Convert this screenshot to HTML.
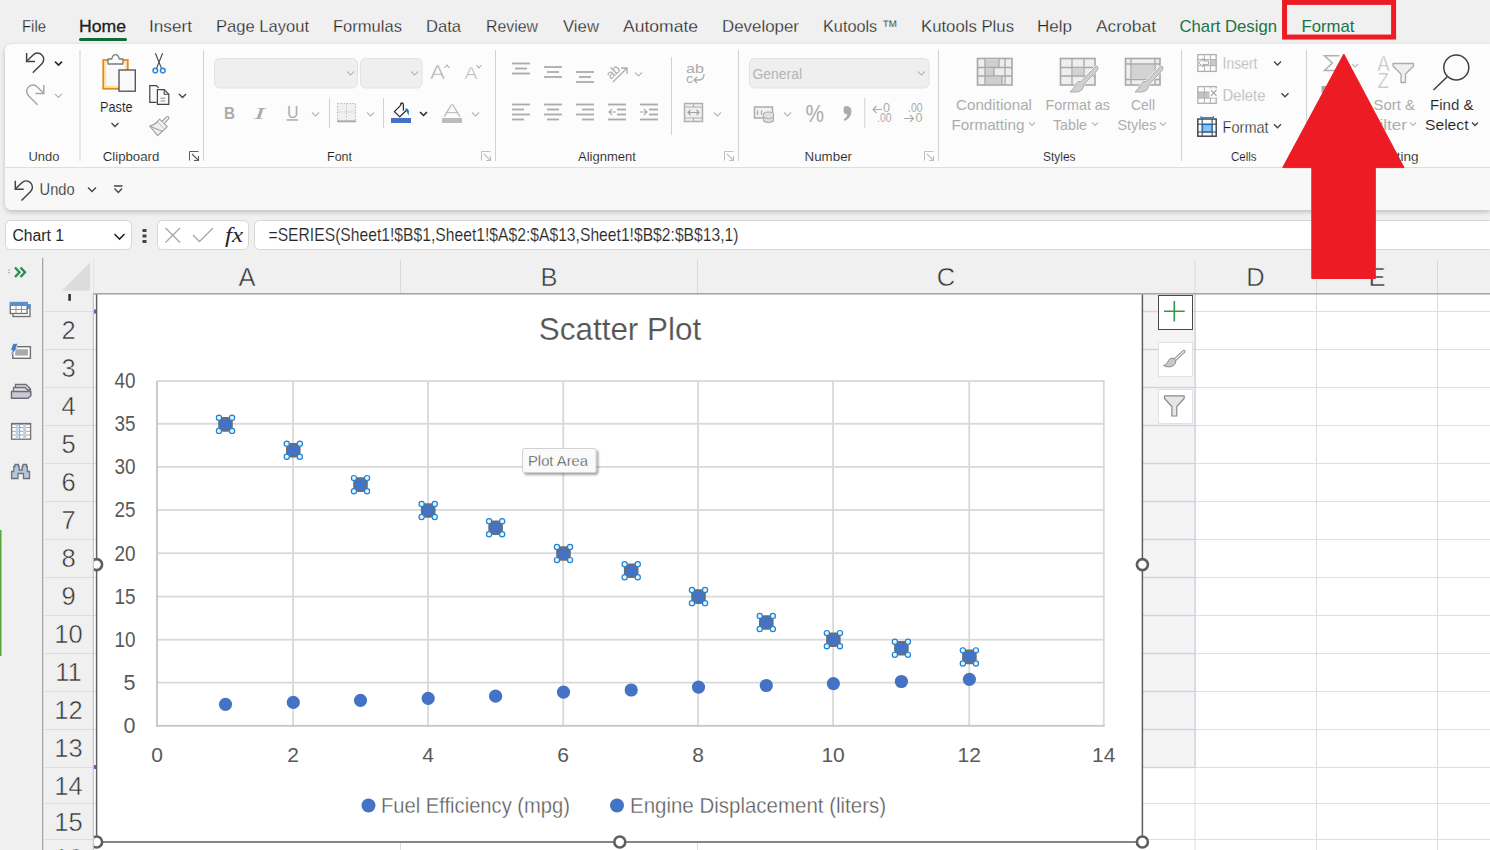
<!DOCTYPE html>
<html><head><meta charset="utf-8">
<style>
html,body{margin:0;padding:0;width:1490px;height:850px;overflow:hidden;background:#f0f0f0;}
svg{display:block;font-family:"Liberation Sans",sans-serif;}
</style></head><body>
<svg width="1490" height="850" viewBox="0 0 1490 850">
<defs>
<filter id="shadow" x="-5%" y="-20%" width="110%" height="150%">
<feGaussianBlur in="SourceAlpha" stdDeviation="2.5"/>
<feOffset dy="2"/>
<feComponentTransfer><feFuncA type="linear" slope="0.22"/></feComponentTransfer>
<feMerge><feMergeNode/><feMergeNode in="SourceGraphic"/></feMerge>
</filter>
<filter id="tipshadow" x="-20%" y="-30%" width="140%" height="180%">
<feGaussianBlur in="SourceAlpha" stdDeviation="1.2"/>
<feOffset dx="1.5" dy="1.5"/>
<feComponentTransfer><feFuncA type="linear" slope="0.35"/></feComponentTransfer>
<feMerge><feMergeNode/><feMergeNode in="SourceGraphic"/></feMerge>
</filter>
</defs>
<rect x="0" y="0" width="1490" height="850" fill="#f0f0f0"/>

<text x="22" y="32" font-size="17" fill="#222222" textLength="24" lengthAdjust="spacingAndGlyphs" stroke="#f0f0f0" stroke-width="0.28">File</text>
<text x="79" y="32" font-size="17" fill="#222222" textLength="47" lengthAdjust="spacingAndGlyphs" stroke="#202020" stroke-width="0.3">Home</text>
<text x="149" y="32" font-size="17" fill="#222222" textLength="43" lengthAdjust="spacingAndGlyphs" stroke="#f0f0f0" stroke-width="0.28">Insert</text>
<text x="216" y="32" font-size="17" fill="#222222" textLength="93" lengthAdjust="spacingAndGlyphs" stroke="#f0f0f0" stroke-width="0.28">Page Layout</text>
<text x="333" y="32" font-size="17" fill="#222222" textLength="69" lengthAdjust="spacingAndGlyphs" stroke="#f0f0f0" stroke-width="0.28">Formulas</text>
<text x="426" y="32" font-size="17" fill="#222222" textLength="35" lengthAdjust="spacingAndGlyphs" stroke="#f0f0f0" stroke-width="0.28">Data</text>
<text x="486" y="32" font-size="17" fill="#222222" textLength="52" lengthAdjust="spacingAndGlyphs" stroke="#f0f0f0" stroke-width="0.28">Review</text>
<text x="563" y="32" font-size="17" fill="#222222" textLength="36" lengthAdjust="spacingAndGlyphs" stroke="#f0f0f0" stroke-width="0.28">View</text>
<text x="623" y="32" font-size="17" fill="#222222" textLength="75" lengthAdjust="spacingAndGlyphs" stroke="#f0f0f0" stroke-width="0.28">Automate</text>
<text x="722" y="32" font-size="17" fill="#222222" textLength="77" lengthAdjust="spacingAndGlyphs" stroke="#f0f0f0" stroke-width="0.28">Developer</text>
<text x="823" y="32" font-size="17" fill="#222222" textLength="75" lengthAdjust="spacingAndGlyphs" stroke="#f0f0f0" stroke-width="0.28">Kutools ™</text>
<text x="921" y="32" font-size="17" fill="#222222" textLength="93" lengthAdjust="spacingAndGlyphs" stroke="#f0f0f0" stroke-width="0.28">Kutools Plus</text>
<text x="1037" y="32" font-size="17" fill="#222222" textLength="35" lengthAdjust="spacingAndGlyphs" stroke="#f0f0f0" stroke-width="0.28">Help</text>
<text x="1096" y="32" font-size="17" fill="#222222" textLength="60" lengthAdjust="spacingAndGlyphs" stroke="#f0f0f0" stroke-width="0.28">Acrobat</text>
<text x="1179.5" y="32" font-size="17" fill="#1a7444" textLength="97.5" lengthAdjust="spacingAndGlyphs" >Chart Design</text>
<text x="1301.5" y="32" font-size="17" fill="#1a7444" textLength="53" lengthAdjust="spacingAndGlyphs" >Format</text>
<rect x="79" y="38" width="48" height="3" rx="1.5" fill="#0e6b36"/>
<g filter="url(#shadow)"><path d="M5,52 Q5,44 13,44 L1490,44 L1490,210 L13,210 Q5,210 5,202 Z" fill="#fcfcfc"/></g>
<path d="M5,168 L1490,168 L1490,210 L13,210 Q5,210 5,202 Z" fill="#f8f8f8"/>
<rect x="5" y="167" width="1485" height="1" fill="#dedede"/>
<rect x="79.5" y="50" width="1" height="111" fill="#d2d2d2"/>
<rect x="203.0" y="50" width="1" height="111" fill="#d2d2d2"/>
<rect x="495.0" y="50" width="1" height="111" fill="#d2d2d2"/>
<rect x="738.0" y="50" width="1" height="111" fill="#d2d2d2"/>
<rect x="938.0" y="50" width="1" height="111" fill="#d2d2d2"/>
<rect x="1181.0" y="50" width="1" height="111" fill="#d2d2d2"/>
<rect x="1306.0" y="50" width="1" height="111" fill="#d2d2d2"/>
<text x="28.5" y="160.5" font-size="13.4" fill="#1e1e1e" textLength="31" lengthAdjust="spacingAndGlyphs" stroke="#fcfcfc" stroke-width="0.12">Undo</text>
<text x="102.7" y="160.5" font-size="13.4" fill="#1e1e1e" textLength="56.7" lengthAdjust="spacingAndGlyphs" stroke="#fcfcfc" stroke-width="0.12">Clipboard</text>
<text x="327" y="160.5" font-size="13.4" fill="#1e1e1e" textLength="25" lengthAdjust="spacingAndGlyphs" stroke="#fcfcfc" stroke-width="0.12">Font</text>
<text x="578" y="160.5" font-size="13.4" fill="#1e1e1e" textLength="58" lengthAdjust="spacingAndGlyphs" stroke="#fcfcfc" stroke-width="0.12">Alignment</text>
<text x="804.6" y="160.5" font-size="13.4" fill="#1e1e1e" textLength="47.4" lengthAdjust="spacingAndGlyphs" stroke="#fcfcfc" stroke-width="0.12">Number</text>
<text x="1043" y="160.5" font-size="13.4" fill="#1e1e1e" textLength="32.6" lengthAdjust="spacingAndGlyphs" stroke="#fcfcfc" stroke-width="0.12">Styles</text>
<text x="1231" y="160.5" font-size="13.4" fill="#1e1e1e" textLength="25.6" lengthAdjust="spacingAndGlyphs" stroke="#fcfcfc" stroke-width="0.12">Cells</text>
<text x="1377" y="160.5" font-size="13.4" fill="#1e1e1e" textLength="41.5" lengthAdjust="spacingAndGlyphs" stroke="#fcfcfc" stroke-width="0.12">Editing</text>
<path d="M189.5,160.5 L189.5,151.5 L198.5,151.5" fill="none" stroke="#5a5a5a" stroke-width="1"/><path d="M192,154 L198.5,160.5 M198.5,156 L198.5,160.5 L194,160.5" fill="none" stroke="#5a5a5a" stroke-width="1.1"/>
<path d="M481.5,160.5 L481.5,151.5 L490.5,151.5" fill="none" stroke="#c0c0c0" stroke-width="1"/><path d="M484,154 L490.5,160.5 M490.5,156 L490.5,160.5 L486,160.5" fill="none" stroke="#c0c0c0" stroke-width="1.1"/>
<path d="M724.5,160.5 L724.5,151.5 L733.5,151.5" fill="none" stroke="#c0c0c0" stroke-width="1"/><path d="M727,154 L733.5,160.5 M733.5,156 L733.5,160.5 L729,160.5" fill="none" stroke="#c0c0c0" stroke-width="1.1"/>
<path d="M924.5,160.5 L924.5,151.5 L933.5,151.5" fill="none" stroke="#c0c0c0" stroke-width="1"/><path d="M927,154 L933.5,160.5 M933.5,156 L933.5,160.5 L929,160.5" fill="none" stroke="#c0c0c0" stroke-width="1.1"/>
<g transform="translate(0,0)" fill="none" stroke="#424242" stroke-width="1.45"><path d="M26.6,53 L26.6,61.4 L35,61.4"/><path d="M27.2,60.8 L33.1,54.9 A6.2,6.2 0 0 1 41.9,63.7 L32.8,72.8"/></g>
<path d="M55,61.6 L58.5,65.1 L62,61.6" fill="none" stroke="#262626" stroke-width="1.5"/>
<g transform="translate(0,32) translate(70.4,0) scale(-1,1)" fill="none" stroke="#a6a6a6" stroke-width="1.45"><path d="M26.6,53 L26.6,61.4 L35,61.4"/><path d="M27.2,60.8 L33.1,54.9 A6.2,6.2 0 0 1 41.9,63.7 L32.8,72.8"/></g>
<path d="M55,93.8 L58.5,97.3 L62,93.8" fill="none" stroke="#b0b0b0" stroke-width="1.2"/>
<rect x="103.2" y="60" width="24.6" height="28.8" fill="#fbe3a2" stroke="#e8861c" stroke-width="1.7"/>
<rect x="106.1" y="62.9" width="18.8" height="23" fill="#f9f9f9"/>
<path d="M108,64 L108,59 L111.8,59 Q112.5,54.6 115.5,54.6 Q118.5,54.6 119.2,59 L123,59 L123,64 Z" fill="#fafafa" stroke="#7a7a7a" stroke-width="1.3" stroke-linejoin="round"/>
<rect x="119" y="70" width="16.3" height="21.2" fill="#f9f9f9" stroke="#4e4e4e" stroke-width="1.3"/>
<text x="100" y="112" font-size="15.5" fill="#1e1e1e" textLength="32.5" lengthAdjust="spacingAndGlyphs" stroke="#fcfcfc" stroke-width="0.12">Paste</text>
<path d="M111.5,123 L115.0,126.5 L118.5,123" fill="none" stroke="#424242" stroke-width="1.3"/>
<path d="M155.4,53.3 L161.6,68.6 M162.6,53.3 L156.4,68.6" stroke="#424242" stroke-width="1.1" fill="none"/>
<circle cx="155.3" cy="70.6" r="2.3" fill="#ffffff" stroke="#2b87d3" stroke-width="1.5"/>
<circle cx="162.8" cy="70.6" r="2.3" fill="#ffffff" stroke="#2b87d3" stroke-width="1.5"/>
<path d="M156.5,102.3 L149.8,102.3 L149.8,85.6 L156.5,85.6 L158.6,87.8" fill="#fafafa" stroke="#424242" stroke-width="1.2"/>
<path d="M157.4,104.4 L157.4,89.6 L164.2,89.6 L168.8,94.2 L168.8,104.4 Z" fill="#fafafa" stroke="#424242" stroke-width="1.2" stroke-linejoin="miter"/>
<path d="M164.2,89.6 L164.2,94.2 L168.8,94.2" fill="none" stroke="#424242" stroke-width="1.1"/>
<path d="M160.4,98.2 L165.2,98.2 M160.4,101 L165.2,101" stroke="#8a8a8a" stroke-width="1"/>
<path d="M179,94 L182.5,97.5 L186,94" fill="none" stroke="#424242" stroke-width="1.3"/>
<path d="M149.6,126 Q155,124.8 157.5,121.4 L165,128.9 L157.7,135.6 Z" fill="#efefef" stroke="#9c9c9c" stroke-width="1.1" stroke-linejoin="round"/>
<path d="M150.5,126.5 L162.3,131.3" stroke="#9c9c9c" stroke-width="1"/>
<path d="M157.5,121.4 L159.7,119.2 L167.2,126.6 L165,128.9" fill="#f4f4f4" stroke="#9c9c9c" stroke-width="1.1"/>
<path d="M162,121.5 L166.6,116.9 Q167.7,116.1 168.6,117 Q169.4,117.9 168.6,119 L164,123.6" fill="#f4f4f4" stroke="#9c9c9c" stroke-width="1.1"/>
<rect x="214.5" y="58.5" width="143" height="29.5" rx="5" fill="#efefef" stroke="#e2e2e2"/>
<rect x="360.5" y="58.5" width="61.5" height="29.5" rx="5" fill="#efefef" stroke="#e2e2e2"/>
<path d="M347,71.5 L350.5,75.0 L354,71.5" fill="none" stroke="#b8b8b8" stroke-width="1.1"/>
<path d="M411,71.5 L414.5,75.0 L418,71.5" fill="none" stroke="#b8b8b8" stroke-width="1.1"/>
<text x="430" y="79" font-size="20" fill="#ababab" textLength="15" lengthAdjust="spacingAndGlyphs" stroke="#fcfcfc" stroke-width="0.6">A</text>
<path d="M444.5,68 L447,65 L449.5,68" fill="none" stroke="#ababab" stroke-width="1.1"/>
<text x="464.5" y="79" font-size="17" fill="#ababab" textLength="13" lengthAdjust="spacingAndGlyphs" stroke="#fcfcfc" stroke-width="0.6">A</text>
<path d="M476.5,65 L479,68 L481.5,65" fill="none" stroke="#ababab" stroke-width="1.1"/>
<text x="224" y="118.5" font-size="17" fill="#ababab" textLength="11" lengthAdjust="spacingAndGlyphs" font-weight="bold">B</text>
<text x="254" y="118.5" font-size="17" fill="#ababab" textLength="11" lengthAdjust="spacingAndGlyphs" font-style="italic" font-family="Liberation Serif">I</text>
<text x="287" y="117.5" font-size="17" fill="#ababab" textLength="11.5" lengthAdjust="spacingAndGlyphs" >U</text>
<rect x="286.5" y="119.2" width="11.5" height="1.5" fill="#ababab"/>
<path d="M312,112.5 L315.5,116.0 L319,112.5" fill="none" stroke="#b8b8b8" stroke-width="1.1"/>
<rect x="329.0" y="98" width="1" height="30" fill="#d2d2d2"/>
<rect x="337.5" y="103.5" width="18" height="17" fill="#f0f0f0" stroke="#b8b8b8" stroke-width="1" stroke-dasharray="1.5 1.5"/>
<path d="M346.5,104 L346.5,120 M338,112 L355,112" stroke="#c4c4c4" stroke-width="1" stroke-dasharray="1.5 1.5"/>
<rect x="337" y="120.5" width="19" height="1.8" fill="#ababab"/>
<path d="M367,112.5 L370.5,116.0 L374,112.5" fill="none" stroke="#b8b8b8" stroke-width="1.1"/>
<rect x="383.0" y="98" width="1" height="30" fill="#d2d2d2"/>
<path d="M400.6,105.4 L394.4,111.6 L399.8,116.9 L406.4,110.3" fill="#fafafa" stroke="#2d2d2d" stroke-width="1.3" stroke-linejoin="round"/>
<path d="M400.6,105.4 Q400.6,103 402,103 Q403.4,103 403.4,105 L403.4,110.6" fill="none" stroke="#2d2d2d" stroke-width="1.3"/>
<path d="M405.3,108.6 Q408.5,107.8 408.9,111.5 L408.6,115.8 Q407.6,113 406.5,111.2 Z" fill="#1f6fc0"/>
<rect x="391" y="118" width="20" height="5" fill="#4472c4"/>
<path d="M420,112 L423.5,115.5 L427,112" fill="none" stroke="#262626" stroke-width="1.5"/>
<text x="442.5" y="117" font-size="19" fill="#ababab" textLength="19" lengthAdjust="spacingAndGlyphs" stroke="#fcfcfc" stroke-width="0.7">A</text>
<rect x="442" y="118" width="20" height="5" fill="#bcbcbc"/>
<path d="M472,112.5 L475.5,116.0 L479,112.5" fill="none" stroke="#b8b8b8" stroke-width="1.1"/>
<rect x="512" y="62.6" width="18" height="1.8" fill="#ababab"/>
<rect x="515" y="67.6" width="12" height="1.8" fill="#ababab"/>
<rect x="512" y="72.6" width="18" height="1.8" fill="#ababab"/>
<rect x="544" y="66.1" width="18" height="1.8" fill="#ababab"/>
<rect x="547" y="71.1" width="12" height="1.8" fill="#ababab"/>
<rect x="544" y="76.1" width="18" height="1.8" fill="#ababab"/>
<rect x="576" y="71.1" width="18" height="1.8" fill="#ababab"/>
<rect x="579" y="76.1" width="12" height="1.8" fill="#ababab"/>
<rect x="576" y="81.1" width="18" height="1.8" fill="#ababab"/>
<text x="0" y="0" font-size="13" fill="#ababab" transform="translate(611,80) rotate(-45)">ab</text>
<path d="M613,82 L627,68 M621,68 L627,68 L627,74" fill="none" stroke="#ababab" stroke-width="1.3"/>
<path d="M635,72.5 L638.5,76.0 L642,72.5" fill="none" stroke="#b8b8b8" stroke-width="1.1"/>
<rect x="512" y="103.6" width="18" height="1.8" fill="#ababab"/>
<rect x="512" y="108.6" width="12" height="1.8" fill="#ababab"/>
<rect x="512" y="113.6" width="18" height="1.8" fill="#ababab"/>
<rect x="512" y="118.6" width="12" height="1.8" fill="#ababab"/>
<rect x="544" y="103.6" width="18" height="1.8" fill="#ababab"/>
<rect x="547" y="108.6" width="12" height="1.8" fill="#ababab"/>
<rect x="544" y="113.6" width="18" height="1.8" fill="#ababab"/>
<rect x="547" y="118.6" width="12" height="1.8" fill="#ababab"/>
<rect x="576" y="103.6" width="18" height="1.8" fill="#ababab"/>
<rect x="582" y="108.6" width="12" height="1.8" fill="#ababab"/>
<rect x="576" y="113.6" width="18" height="1.8" fill="#ababab"/>
<rect x="582" y="118.6" width="12" height="1.8" fill="#ababab"/>
<rect x="608" y="103.6" width="18" height="1.8" fill="#ababab"/>
<rect x="617" y="108.6" width="9" height="1.8" fill="#ababab"/>
<rect x="617" y="113.6" width="9" height="1.8" fill="#ababab"/>
<rect x="608" y="118.6" width="18" height="1.8" fill="#ababab"/>
<path d="M616,112 L609,112 M612,109 L609,112 L612,115" fill="none" stroke="#ababab" stroke-width="1.2"/>
<rect x="640" y="103.6" width="18" height="1.8" fill="#ababab"/>
<rect x="649" y="108.6" width="9" height="1.8" fill="#ababab"/>
<rect x="649" y="113.6" width="9" height="1.8" fill="#ababab"/>
<rect x="640" y="118.6" width="18" height="1.8" fill="#ababab"/>
<path d="M640,112 L647,112 M644,109 L647,112 L644,115" fill="none" stroke="#ababab" stroke-width="1.2"/>
<rect x="671.0" y="57" width="1" height="78" fill="#d2d2d2"/>
<text x="686" y="72.5" font-size="13" fill="#ababab" textLength="18" lengthAdjust="spacingAndGlyphs" >ab</text>
<text x="686" y="83" font-size="13" fill="#ababab" textLength="7" lengthAdjust="spacingAndGlyphs" >c</text>
<path d="M704,74 Q704,80 699,80 L694,80 M697,77 L694,80 L697,83" fill="none" stroke="#ababab" stroke-width="1.3"/>
<rect x="684.5" y="103.5" width="18" height="18" fill="#eeeeee" stroke="#b0b0b0" stroke-width="1.5"/>
<path d="M685,107 L702,107 M685,118 L702,118 M693.5,103.5 L693.5,107 M693.5,118 L693.5,121.5" stroke="#b0b0b0" stroke-width="1.2"/>
<path d="M688,112.5 L699,112.5 M690.5,110 L688,112.5 L690.5,115 M696.5,110 L699,112.5 L696.5,115" fill="none" stroke="#a0a0a0" stroke-width="1.2"/>
<path d="M714,112.5 L717.5,116.0 L721,112.5" fill="none" stroke="#b8b8b8" stroke-width="1.1"/>
<rect x="749.5" y="58.5" width="179.5" height="29.5" rx="5" fill="#efefef" stroke="#e2e2e2"/>
<text x="752.5" y="79" font-size="15.5" fill="#b4b4b4" textLength="49.5" lengthAdjust="spacingAndGlyphs" >General</text>
<path d="M918,71.5 L921.5,75.0 L925,71.5" fill="none" stroke="#b8b8b8" stroke-width="1.1"/>
<rect x="754.5" y="107" width="18" height="11" fill="#f2f2f2" stroke="#ababab" stroke-width="1.5"/>
<path d="M758,110 Q756.5,112.5 758,115 M762,110 Q760.5,112.5 762,115" fill="none" stroke="#ababab" stroke-width="1.1"/>
<ellipse cx="768.5" cy="114" rx="5" ry="2" fill="#e0e0e0" stroke="#ababab" stroke-width="1.1"/>
<path d="M763.5,114 L763.5,121 Q768.5,124 773.5,121 L773.5,114" fill="#e0e0e0" stroke="#ababab" stroke-width="1.1"/>
<path d="M763.5,117.5 Q768.5,120 773.5,117.5" fill="none" stroke="#ababab" stroke-width="1"/>
<path d="M784,112.5 L787.5,116.0 L791,112.5" fill="none" stroke="#b8b8b8" stroke-width="1.1"/>
<text x="805.5" y="122" font-size="24" fill="#ababab" textLength="18.5" lengthAdjust="spacingAndGlyphs" >%</text>
<path d="M846,106 Q851,106 851.5,111 Q851.5,118 844.5,121 L843.5,119.5 Q847,117.5 847.5,114.5 Q843.5,114.5 843.5,110 Q843.5,106 846,106 Z" fill="#ababab"/>
<rect x="864.2" y="98" width="1" height="30" fill="#d2d2d2"/>
<text x="883" y="111.5" font-size="12.5" fill="#ababab" textLength="7" lengthAdjust="spacingAndGlyphs" >0</text>
<text x="877" y="122" font-size="12.5" fill="#ababab" textLength="14.5" lengthAdjust="spacingAndGlyphs" >.00</text>
<path d="M882,109.5 L873.5,109.5 M876.5,106 L873,109.5 L876.5,113" fill="none" stroke="#ababab" stroke-width="1.1"/>
<text x="908" y="111.5" font-size="12.5" fill="#ababab" textLength="14.5" lengthAdjust="spacingAndGlyphs" >.00</text>
<text x="915.5" y="122" font-size="12.5" fill="#ababab" textLength="7" lengthAdjust="spacingAndGlyphs" >0</text>
<path d="M904,118.5 L913.5,118.5 M910,115 L913.5,118.5 L910,122" fill="none" stroke="#ababab" stroke-width="1.1"/>
<rect x="977.5" y="58.5" width="34.5" height="26.5" fill="#eeeeee" stroke="#a8a8a8" stroke-width="1.6"/>
<rect x="985" y="60" width="14" height="7.5" fill="#cfcfcf"/><rect x="985" y="68.5" width="9" height="7.5" fill="#cfcfcf"/><rect x="985" y="77" width="17" height="7" fill="#cfcfcf"/>
<path d="M977.5,67.5 L1012,67.5 M977.5,76 L1012,76 M985,58.5 L985,85 M1005,58.5 L1005,85" stroke="#a8a8a8" stroke-width="1.3"/>
<path d="M999,58.5 L999,67.5 M994,67.5 L994,76 M1002,76 L1002,85" stroke="#a8a8a8" stroke-width="1.3"/>
<text x="956" y="109.5" font-size="14.5" fill="#adadad" textLength="76" lengthAdjust="spacingAndGlyphs" >Conditional</text>
<text x="951.5" y="129.5" font-size="14.5" fill="#adadad" textLength="73" lengthAdjust="spacingAndGlyphs" >Formatting</text>
<path d="M1029,122.5 L1032.0,125.5 L1035,122.5" fill="none" stroke="#b8b8b8" stroke-width="1.1"/>
<rect x="1060.5" y="58.5" width="34.5" height="26.5" fill="#eeeeee" stroke="#a8a8a8" stroke-width="1.6"/>
<path d="M1060.5,67.5 L1095,67.5 M1060.5,76 L1095,76 M1072,58.5 L1072,85 M1084,58.5 L1084,85" stroke="#a8a8a8" stroke-width="1.3"/>
<rect x="1073" y="68.5" width="10" height="6.5" fill="#d2d2d2"/>
<path d="M1097.5,66.5 Q1099,68 1097,70.5 L1083.5,85 Q1083.5,91.5 1076.5,92 L1070,92 Q1074,88.5 1075.5,84.5 Q1077.5,80.5 1081,81.5 L1095,67 Q1096.5,65.5 1097.5,66.5 Z" fill="#d0d0d0" stroke="#ffffff" stroke-width="1.8"/>
<path d="M1097.5,66.5 Q1099,68 1097,70.5 L1083.5,85 Q1083.5,91.5 1076.5,92 L1070,92 Q1074,88.5 1075.5,84.5 Q1077.5,80.5 1081,81.5 L1095,67 Q1096.5,65.5 1097.5,66.5 Z" fill="#d0d0d0" stroke="#ababab" stroke-width="1"/>
<text x="1045.5" y="109.5" font-size="14.5" fill="#adadad" textLength="64.5" lengthAdjust="spacingAndGlyphs" >Format as</text>
<text x="1053" y="129.5" font-size="14.5" fill="#adadad" textLength="34" lengthAdjust="spacingAndGlyphs" >Table</text>
<path d="M1092,122.5 L1095.0,125.5 L1098,122.5" fill="none" stroke="#b8b8b8" stroke-width="1.1"/>
<rect x="1125.5" y="58.5" width="34.5" height="26.5" fill="#eeeeee" stroke="#a8a8a8" stroke-width="1.6"/>
<path d="M1125.5,64 L1160,64 M1125.5,79.5 L1160,79.5 M1131,58.5 L1131,85 M1155,58.5 L1155,85" stroke="#a8a8a8" stroke-width="1.3"/>
<rect x="1132" y="65" width="22" height="13.5" fill="#d2d2d2"/>
<path d="M1162.5,66.5 Q1164,68 1162,70.5 L1148.5,85 Q1148.5,91.5 1141.5,92 L1135,92 Q1139,88.5 1140.5,84.5 Q1142.5,80.5 1146,81.5 L1160,67 Q1161.5,65.5 1162.5,66.5 Z" fill="#d0d0d0" stroke="#ffffff" stroke-width="1.8"/>
<path d="M1162.5,66.5 Q1164,68 1162,70.5 L1148.5,85 Q1148.5,91.5 1141.5,92 L1135,92 Q1139,88.5 1140.5,84.5 Q1142.5,80.5 1146,81.5 L1160,67 Q1161.5,65.5 1162.5,66.5 Z" fill="#d0d0d0" stroke="#ababab" stroke-width="1"/>
<text x="1131" y="109.5" font-size="14.5" fill="#adadad" textLength="24" lengthAdjust="spacingAndGlyphs" >Cell</text>
<text x="1117.5" y="129.5" font-size="14.5" fill="#adadad" textLength="39" lengthAdjust="spacingAndGlyphs" >Styles</text>
<path d="M1160,122.5 L1163.0,125.5 L1166,122.5" fill="none" stroke="#b8b8b8" stroke-width="1.1"/>
<rect x="1210.4" y="59.6" width="6.1" height="6.1" fill="#c8c8c8"/>
<rect x="1197.8" y="54.6" width="18.40000000000009" height="16.800000000000004" fill="none" stroke="#b0b0b0" stroke-width="1.3"/>
<path d="M1204.4,54.6 L1204.4,71.4 M1210.4,54.6 L1210.4,71.4 M1197.8,59.6 L1216.2,59.6 M1197.8,65.7 L1216.2,65.7 " stroke="#b0b0b0" stroke-width="1"/>
<path d="M1208.5,61 L1203,61 L1203,58.5 L1198.5,62.7 L1203,66.8 L1203,64.4 L1208.5,64.4 Z" fill="#fcfcfc" stroke="#a8a8a8" stroke-width="1"/>
<text x="1222.6" y="69" font-size="16" fill="#b0b0b0" textLength="34.8" lengthAdjust="spacingAndGlyphs" stroke="#fcfcfc" stroke-width="0.3">Insert</text>
<path d="M1274,61.5 L1277.5,65.0 L1281,61.5" fill="none" stroke="#424242" stroke-width="1.3"/>
<rect x="1197.8" y="92" width="12.6" height="6.1" fill="#c4c4c4"/>
<rect x="1197.8" y="86.6" width="18.40000000000009" height="16.700000000000003" fill="none" stroke="#b0b0b0" stroke-width="1.3"/>
<path d="M1204.4,86.6 L1204.4,103.3 M1210.4,86.6 L1210.4,103.3 M1197.8,92 L1216.2,92 M1197.8,98.1 L1216.2,98.1 " stroke="#b0b0b0" stroke-width="1"/>
<rect x="1209.5" y="88.5" width="7.5" height="9" fill="#fcfcfc"/>
<path d="M1211,90 L1216.5,95.8 M1216.5,90 L1211,95.8" stroke="#a8a8a8" stroke-width="1.2"/>
<text x="1222.6" y="100.6" font-size="16" fill="#b0b0b0" textLength="42.9" lengthAdjust="spacingAndGlyphs" stroke="#fcfcfc" stroke-width="0.3">Delete</text>
<path d="M1281.5,93.3 L1285.0,96.8 L1288.5,93.3" fill="none" stroke="#424242" stroke-width="1.3"/>
<rect x="1197.8" y="119" width="18.40000000000009" height="17.19999999999999" fill="#fafafa" stroke="#3c3c3c" stroke-width="1.4"/>
<path d="M1202.2,119 L1202.2,136.2 M1212.1,119 L1212.1,136.2 M1197.8,124.2 L1216.2,124.2 M1197.8,132 L1216.2,132 " stroke="#3c3c3c" stroke-width="1"/>
<rect x="1202.4" y="124.4" width="9.6" height="7.5" fill="#8fc0ec" stroke="#1f6fc0" stroke-width="1.4"/>
<path d="M1201,117.6 L1213.5,117.6 M1201,116 L1201,120 M1213.5,116 L1213.5,120" stroke="#2b87d3" stroke-width="1.2"/>
<text x="1222.6" y="132.6" font-size="16" fill="#1e1e1e" textLength="46" lengthAdjust="spacingAndGlyphs" stroke="#fcfcfc" stroke-width="0.3">Format</text>
<path d="M1274,124.3 L1277.5,127.8 L1281,124.3" fill="none" stroke="#424242" stroke-width="1.3"/>
<path d="M1339.5,55.8 L1324.5,55.8 L1332.3,63 L1324.5,70.5 L1340,70.5" fill="none" stroke="#b0b0b0" stroke-width="1.5"/>
<rect x="1321.5" y="86" width="5.5" height="7" fill="#a8a8a8"/>
<path d="M1352,64 L1355.0,67 L1358,64" fill="none" stroke="#b8b8b8" stroke-width="1.1"/>
<text x="1377.4" y="70.5" font-size="21.5" fill="#b4b4b4" textLength="12" lengthAdjust="spacingAndGlyphs" stroke="#fcfcfc" stroke-width="0.6">A</text>
<text x="1377.6" y="88.1" font-size="21.5" fill="#b4b4b4" textLength="11.5" lengthAdjust="spacingAndGlyphs" stroke="#fcfcfc" stroke-width="0.6">Z</text>
<path d="M1393,63.5 L1413.5,63.5 L1413.5,66 L1405.5,74 L1405.5,82.5 L1401,82.5 L1401,74 L1393,66 Z" fill="#f0f0f0" stroke="#ababab" stroke-width="1.3" stroke-linejoin="round"/>
<text x="1373.5" y="110" font-size="14.5" fill="#adadad" textLength="41.5" lengthAdjust="spacingAndGlyphs" >Sort &amp;</text>
<text x="1369" y="129.5" font-size="14.5" fill="#adadad" textLength="38" lengthAdjust="spacingAndGlyphs" >Filter</text>
<path d="M1410,122.5 L1413.0,125.5 L1416,122.5" fill="none" stroke="#b8b8b8" stroke-width="1.1"/>
<circle cx="1456.3" cy="67.5" r="12.5" fill="none" stroke="#404040" stroke-width="1.5"/>
<path d="M1447.5,76.5 L1433.5,90" stroke="#404040" stroke-width="1.5"/>
<text x="1430" y="110" font-size="14.5" fill="#1e1e1e" textLength="43.5" lengthAdjust="spacingAndGlyphs" stroke="#fcfcfc" stroke-width="0.12">Find &amp;</text>
<text x="1425" y="129.5" font-size="14.5" fill="#1e1e1e" textLength="43.5" lengthAdjust="spacingAndGlyphs" stroke="#fcfcfc" stroke-width="0.12">Select</text>
<path d="M1472,122.5 L1475.0,125.5 L1478,122.5" fill="none" stroke="#424242" stroke-width="1.3"/>
<g transform="translate(-11.3,127.8)" fill="none" stroke="#424242" stroke-width="1.45"><path d="M26.6,53 L26.6,61.4 L35,61.4"/><path d="M27.2,60.8 L33.1,54.9 A6.2,6.2 0 0 1 41.9,63.7 L32.8,72.8"/></g>
<text x="39.6" y="195.3" font-size="16" fill="#1e1e1e" textLength="35" lengthAdjust="spacingAndGlyphs" stroke="#f8f8f8" stroke-width="0.25">Undo</text>
<path d="M88,187.5 L92.0,191.5 L96,187.5" fill="none" stroke="#424242" stroke-width="1.3"/>
<path d="M114,186 L122.5,186 M114.5,188.5 L118.3,192.5 L122,188.5" fill="none" stroke="#424242" stroke-width="1.3"/>
<rect x="5.5" y="220.5" width="126" height="29" rx="5" fill="#fff" stroke="#d6d6d6"/>
<text x="12.5" y="241" font-size="16" fill="#262626" textLength="51.5" lengthAdjust="spacingAndGlyphs" >Chart 1</text>
<path d="M114.5,234 L119.5,239 L124.5,234" fill="none" stroke="#262626" stroke-width="1.6"/>
<rect x="142.5" y="229" width="4" height="3" fill="#444"/>
<rect x="142.5" y="234.5" width="4" height="3" fill="#444"/>
<rect x="142.5" y="240" width="4" height="3" fill="#444"/>
<rect x="157.5" y="220.5" width="91" height="29" rx="5" fill="#fff" stroke="#d6d6d6"/>
<path d="M165.5,228 L180,242.5 M180,228 L165.5,242.5" stroke="#a6a6a6" stroke-width="1.3" fill="none"/>
<path d="M193,235 L199.5,241.5 L213,228" stroke="#a6a6a6" stroke-width="1.3" fill="none"/>
<text x="225" y="242" font-family="Liberation Serif" font-style="italic" font-size="21" fill="#262626" textLength="18" lengthAdjust="spacingAndGlyphs">fx</text>
<rect x="254.5" y="220.5" width="1240" height="29" rx="5" fill="#fff" stroke="#d6d6d6"/>
<text x="268.5" y="241" font-size="17.8" fill="#262626" textLength="470" lengthAdjust="spacingAndGlyphs" stroke="#ffffff" stroke-width="0.15">=SERIES(Sheet1!$B$1,Sheet1!$A$2:$A$13,Sheet1!$B$2:$B$13,1)</text>
<rect x="94" y="294" width="1396" height="556" fill="#ffffff"/>
<rect x="94" y="311.0" width="1396" height="1" fill="#dedede"/>
<rect x="94" y="349.0" width="1396" height="1" fill="#dedede"/>
<rect x="94" y="387.0" width="1396" height="1" fill="#dedede"/>
<rect x="94" y="425.0" width="1396" height="1" fill="#dedede"/>
<rect x="94" y="463.0" width="1396" height="1" fill="#dedede"/>
<rect x="94" y="501.0" width="1396" height="1" fill="#dedede"/>
<rect x="94" y="539.0" width="1396" height="1" fill="#dedede"/>
<rect x="94" y="577.0" width="1396" height="1" fill="#dedede"/>
<rect x="94" y="615.0" width="1396" height="1" fill="#dedede"/>
<rect x="94" y="653.0" width="1396" height="1" fill="#dedede"/>
<rect x="94" y="691.0" width="1396" height="1" fill="#dedede"/>
<rect x="94" y="729.0" width="1396" height="1" fill="#dedede"/>
<rect x="94" y="767.0" width="1396" height="1" fill="#dedede"/>
<rect x="94" y="803.0" width="1396" height="1" fill="#dedede"/>
<rect x="94" y="839.0" width="1396" height="1" fill="#dedede"/>
<rect x="400.0" y="294" width="1" height="556" fill="#dedede"/>
<rect x="697.0" y="294" width="1" height="556" fill="#dedede"/>
<rect x="1194.5" y="294" width="1" height="556" fill="#dedede"/>
<rect x="1316.0" y="294" width="1" height="556" fill="#dedede"/>
<rect x="1437.0" y="294" width="1" height="556" fill="#dedede"/>
<rect x="1143" y="294" width="52" height="473.5" fill="#f4f4f5"/>
<rect x="1143" y="310.8" width="52" height="1.4" fill="#d3d3de"/>
<rect x="1143" y="348.8" width="52" height="1.4" fill="#d3d3de"/>
<rect x="1143" y="386.8" width="52" height="1.4" fill="#d3d3de"/>
<rect x="1143" y="424.8" width="52" height="1.4" fill="#d3d3de"/>
<rect x="1143" y="462.8" width="52" height="1.4" fill="#d3d3de"/>
<rect x="1143" y="500.8" width="52" height="1.4" fill="#d3d3de"/>
<rect x="1143" y="538.8" width="52" height="1.4" fill="#d3d3de"/>
<rect x="1143" y="576.8" width="52" height="1.4" fill="#d3d3de"/>
<rect x="1143" y="614.8" width="52" height="1.4" fill="#d3d3de"/>
<rect x="1143" y="652.8" width="52" height="1.4" fill="#d3d3de"/>
<rect x="1143" y="690.8" width="52" height="1.4" fill="#d3d3de"/>
<rect x="1143" y="728.8" width="52" height="1.4" fill="#d3d3de"/>
<rect x="1143" y="766.8" width="52" height="1.4" fill="#d3d3de"/>
<rect x="1194.3" y="294" width="1.5" height="473.5" fill="#d3d3de"/>
<rect x="96" y="294" width="1047" height="548" fill="#ffffff"/>
<path d="M96.6,294 L96.6,842 L1142.4,842 L1142.4,294" fill="none" stroke="#5e5e5e" stroke-width="1.5"/>
<rect x="94" y="309.5" width="2" height="4" fill="#7a4fc4"/>
<rect x="94" y="765" width="2" height="4" fill="#7a4fc4"/>
<rect x="157" y="681.70" width="947.6" height="1.8" fill="#d9d9d9"/>
<rect x="157" y="638.80" width="947.6" height="1.8" fill="#d9d9d9"/>
<rect x="157" y="595.70" width="947.6" height="1.8" fill="#d9d9d9"/>
<rect x="157" y="552.30" width="947.6" height="1.8" fill="#d9d9d9"/>
<rect x="157" y="509.10" width="947.6" height="1.8" fill="#d9d9d9"/>
<rect x="157" y="466.00" width="947.6" height="1.8" fill="#d9d9d9"/>
<rect x="157" y="422.90" width="947.6" height="1.8" fill="#d9d9d9"/>
<rect x="157" y="380.10" width="947.6" height="1.8" fill="#d9d9d9"/>
<rect x="292.20" y="381" width="1.8" height="345" fill="#d9d9d9"/>
<rect x="427.20" y="381" width="1.8" height="345" fill="#d9d9d9"/>
<rect x="562.30" y="381" width="1.8" height="345" fill="#d9d9d9"/>
<rect x="697.20" y="381" width="1.8" height="345" fill="#d9d9d9"/>
<rect x="832.20" y="381" width="1.8" height="345" fill="#d9d9d9"/>
<rect x="968.30" y="381" width="1.8" height="345" fill="#d9d9d9"/>
<rect x="1102.90" y="381" width="1.8" height="345" fill="#d9d9d9"/>
<rect x="156.1" y="381" width="1.8" height="345.6" fill="#c6c6c6"/>
<rect x="156.1" y="724.9" width="948.5" height="1.8" fill="#c6c6c6"/>
<text x="135.5" y="732.80" font-size="21.5" fill="#595959" text-anchor="end">0</text>
<text x="135.5" y="689.74" font-size="21.5" fill="#595959" text-anchor="end">5</text>
<text x="135.5" y="646.67" font-size="21.5" fill="#595959" text-anchor="end" textLength="21" lengthAdjust="spacingAndGlyphs">10</text>
<text x="135.5" y="603.61" font-size="21.5" fill="#595959" text-anchor="end" textLength="21" lengthAdjust="spacingAndGlyphs">15</text>
<text x="135.5" y="560.55" font-size="21.5" fill="#595959" text-anchor="end" textLength="21" lengthAdjust="spacingAndGlyphs">20</text>
<text x="135.5" y="517.49" font-size="21.5" fill="#595959" text-anchor="end" textLength="21" lengthAdjust="spacingAndGlyphs">25</text>
<text x="135.5" y="474.42" font-size="21.5" fill="#595959" text-anchor="end" textLength="21" lengthAdjust="spacingAndGlyphs">30</text>
<text x="135.5" y="431.36" font-size="21.5" fill="#595959" text-anchor="end" textLength="21" lengthAdjust="spacingAndGlyphs">35</text>
<text x="135.5" y="388.30" font-size="21.5" fill="#595959" text-anchor="end" textLength="21" lengthAdjust="spacingAndGlyphs">40</text>
<text x="157.00" y="762" font-size="21" fill="#595959" text-anchor="middle">0</text>
<text x="293.10" y="762" font-size="21" fill="#595959" text-anchor="middle">2</text>
<text x="428.10" y="762" font-size="21" fill="#595959" text-anchor="middle">4</text>
<text x="563.20" y="762" font-size="21" fill="#595959" text-anchor="middle">6</text>
<text x="698.10" y="762" font-size="21" fill="#595959" text-anchor="middle">8</text>
<text x="833.10" y="762" font-size="21" fill="#595959" text-anchor="middle">10</text>
<text x="969.20" y="762" font-size="21" fill="#595959" text-anchor="middle">12</text>
<text x="1103.80" y="762" font-size="21" fill="#595959" text-anchor="middle">14</text>
<text x="538.8" y="340" font-size="31.5" fill="#555555" textLength="162.4" lengthAdjust="spacingAndGlyphs" stroke="#ffffff" stroke-width="0.2">Scatter Plot</text>
<circle cx="225.50" cy="704.3" r="6.6" fill="#4472c4"/>
<circle cx="293.30" cy="702.4" r="6.6" fill="#4472c4"/>
<circle cx="360.50" cy="700.3" r="6.6" fill="#4472c4"/>
<circle cx="428.20" cy="698.4" r="6.6" fill="#4472c4"/>
<circle cx="495.60" cy="696.2" r="6.6" fill="#4472c4"/>
<circle cx="563.50" cy="692.2" r="6.6" fill="#4472c4"/>
<circle cx="631.20" cy="690" r="6.6" fill="#4472c4"/>
<circle cx="698.50" cy="687.1" r="6.6" fill="#4472c4"/>
<circle cx="766.30" cy="685.5" r="6.6" fill="#4472c4"/>
<circle cx="833.40" cy="683.6" r="6.6" fill="#4472c4"/>
<circle cx="901.40" cy="681.5" r="6.6" fill="#4472c4"/>
<circle cx="969.40" cy="679.3" r="6.6" fill="#4472c4"/>
<rect x="218.20" y="417.06" width="14.6" height="14.6" rx="5" fill="#6d6d6d"/>
<circle cx="225.50" cy="424.36" r="5.8" fill="#4472c4"/>
<circle cx="218.95" cy="417.81" r="2.6" fill="#eaf3fb" stroke="#1a84d8" stroke-width="1.2"/>
<circle cx="218.95" cy="430.91" r="2.6" fill="#eaf3fb" stroke="#1a84d8" stroke-width="1.2"/>
<circle cx="232.05" cy="417.81" r="2.6" fill="#eaf3fb" stroke="#1a84d8" stroke-width="1.2"/>
<circle cx="232.05" cy="430.91" r="2.6" fill="#eaf3fb" stroke="#1a84d8" stroke-width="1.2"/>
<rect x="286.00" y="442.90" width="14.6" height="14.6" rx="5" fill="#6d6d6d"/>
<circle cx="293.30" cy="450.20" r="5.8" fill="#4472c4"/>
<circle cx="286.75" cy="443.65" r="2.6" fill="#eaf3fb" stroke="#1a84d8" stroke-width="1.2"/>
<circle cx="286.75" cy="456.75" r="2.6" fill="#eaf3fb" stroke="#1a84d8" stroke-width="1.2"/>
<circle cx="299.85" cy="443.65" r="2.6" fill="#eaf3fb" stroke="#1a84d8" stroke-width="1.2"/>
<circle cx="299.85" cy="456.75" r="2.6" fill="#eaf3fb" stroke="#1a84d8" stroke-width="1.2"/>
<rect x="353.20" y="477.35" width="14.6" height="14.6" rx="5" fill="#6d6d6d"/>
<circle cx="360.50" cy="484.65" r="5.8" fill="#4472c4"/>
<circle cx="353.95" cy="478.10" r="2.6" fill="#eaf3fb" stroke="#1a84d8" stroke-width="1.2"/>
<circle cx="353.95" cy="491.20" r="2.6" fill="#eaf3fb" stroke="#1a84d8" stroke-width="1.2"/>
<circle cx="367.05" cy="478.10" r="2.6" fill="#eaf3fb" stroke="#1a84d8" stroke-width="1.2"/>
<circle cx="367.05" cy="491.20" r="2.6" fill="#eaf3fb" stroke="#1a84d8" stroke-width="1.2"/>
<rect x="420.90" y="503.19" width="14.6" height="14.6" rx="5" fill="#6d6d6d"/>
<circle cx="428.20" cy="510.49" r="5.8" fill="#4472c4"/>
<circle cx="421.65" cy="503.94" r="2.6" fill="#eaf3fb" stroke="#1a84d8" stroke-width="1.2"/>
<circle cx="421.65" cy="517.04" r="2.6" fill="#eaf3fb" stroke="#1a84d8" stroke-width="1.2"/>
<circle cx="434.75" cy="503.94" r="2.6" fill="#eaf3fb" stroke="#1a84d8" stroke-width="1.2"/>
<circle cx="434.75" cy="517.04" r="2.6" fill="#eaf3fb" stroke="#1a84d8" stroke-width="1.2"/>
<rect x="488.30" y="520.41" width="14.6" height="14.6" rx="5" fill="#6d6d6d"/>
<circle cx="495.60" cy="527.71" r="5.8" fill="#4472c4"/>
<circle cx="489.05" cy="521.16" r="2.6" fill="#eaf3fb" stroke="#1a84d8" stroke-width="1.2"/>
<circle cx="489.05" cy="534.26" r="2.6" fill="#eaf3fb" stroke="#1a84d8" stroke-width="1.2"/>
<circle cx="502.15" cy="521.16" r="2.6" fill="#eaf3fb" stroke="#1a84d8" stroke-width="1.2"/>
<circle cx="502.15" cy="534.26" r="2.6" fill="#eaf3fb" stroke="#1a84d8" stroke-width="1.2"/>
<rect x="556.20" y="546.25" width="14.6" height="14.6" rx="5" fill="#6d6d6d"/>
<circle cx="563.50" cy="553.55" r="5.8" fill="#4472c4"/>
<circle cx="556.95" cy="547.00" r="2.6" fill="#eaf3fb" stroke="#1a84d8" stroke-width="1.2"/>
<circle cx="556.95" cy="560.10" r="2.6" fill="#eaf3fb" stroke="#1a84d8" stroke-width="1.2"/>
<circle cx="570.05" cy="547.00" r="2.6" fill="#eaf3fb" stroke="#1a84d8" stroke-width="1.2"/>
<circle cx="570.05" cy="560.10" r="2.6" fill="#eaf3fb" stroke="#1a84d8" stroke-width="1.2"/>
<rect x="623.90" y="563.48" width="14.6" height="14.6" rx="5" fill="#6d6d6d"/>
<circle cx="631.20" cy="570.77" r="5.8" fill="#4472c4"/>
<circle cx="624.65" cy="564.23" r="2.6" fill="#eaf3fb" stroke="#1a84d8" stroke-width="1.2"/>
<circle cx="624.65" cy="577.32" r="2.6" fill="#eaf3fb" stroke="#1a84d8" stroke-width="1.2"/>
<circle cx="637.75" cy="564.23" r="2.6" fill="#eaf3fb" stroke="#1a84d8" stroke-width="1.2"/>
<circle cx="637.75" cy="577.32" r="2.6" fill="#eaf3fb" stroke="#1a84d8" stroke-width="1.2"/>
<rect x="691.20" y="589.31" width="14.6" height="14.6" rx="5" fill="#6d6d6d"/>
<circle cx="698.50" cy="596.61" r="5.8" fill="#4472c4"/>
<circle cx="691.95" cy="590.06" r="2.6" fill="#eaf3fb" stroke="#1a84d8" stroke-width="1.2"/>
<circle cx="691.95" cy="603.16" r="2.6" fill="#eaf3fb" stroke="#1a84d8" stroke-width="1.2"/>
<circle cx="705.05" cy="590.06" r="2.6" fill="#eaf3fb" stroke="#1a84d8" stroke-width="1.2"/>
<circle cx="705.05" cy="603.16" r="2.6" fill="#eaf3fb" stroke="#1a84d8" stroke-width="1.2"/>
<rect x="759.00" y="615.15" width="14.6" height="14.6" rx="5" fill="#6d6d6d"/>
<circle cx="766.30" cy="622.45" r="5.8" fill="#4472c4"/>
<circle cx="759.75" cy="615.90" r="2.6" fill="#eaf3fb" stroke="#1a84d8" stroke-width="1.2"/>
<circle cx="759.75" cy="629.00" r="2.6" fill="#eaf3fb" stroke="#1a84d8" stroke-width="1.2"/>
<circle cx="772.85" cy="615.90" r="2.6" fill="#eaf3fb" stroke="#1a84d8" stroke-width="1.2"/>
<circle cx="772.85" cy="629.00" r="2.6" fill="#eaf3fb" stroke="#1a84d8" stroke-width="1.2"/>
<rect x="826.10" y="632.38" width="14.6" height="14.6" rx="5" fill="#6d6d6d"/>
<circle cx="833.40" cy="639.67" r="5.8" fill="#4472c4"/>
<circle cx="826.85" cy="633.12" r="2.6" fill="#eaf3fb" stroke="#1a84d8" stroke-width="1.2"/>
<circle cx="826.85" cy="646.22" r="2.6" fill="#eaf3fb" stroke="#1a84d8" stroke-width="1.2"/>
<circle cx="839.95" cy="633.12" r="2.6" fill="#eaf3fb" stroke="#1a84d8" stroke-width="1.2"/>
<circle cx="839.95" cy="646.22" r="2.6" fill="#eaf3fb" stroke="#1a84d8" stroke-width="1.2"/>
<rect x="894.10" y="640.99" width="14.6" height="14.6" rx="5" fill="#6d6d6d"/>
<circle cx="901.40" cy="648.29" r="5.8" fill="#4472c4"/>
<circle cx="894.85" cy="641.74" r="2.6" fill="#eaf3fb" stroke="#1a84d8" stroke-width="1.2"/>
<circle cx="894.85" cy="654.84" r="2.6" fill="#eaf3fb" stroke="#1a84d8" stroke-width="1.2"/>
<circle cx="907.95" cy="641.74" r="2.6" fill="#eaf3fb" stroke="#1a84d8" stroke-width="1.2"/>
<circle cx="907.95" cy="654.84" r="2.6" fill="#eaf3fb" stroke="#1a84d8" stroke-width="1.2"/>
<rect x="962.10" y="649.60" width="14.6" height="14.6" rx="5" fill="#6d6d6d"/>
<circle cx="969.40" cy="656.90" r="5.8" fill="#4472c4"/>
<circle cx="962.85" cy="650.35" r="2.6" fill="#eaf3fb" stroke="#1a84d8" stroke-width="1.2"/>
<circle cx="962.85" cy="663.45" r="2.6" fill="#eaf3fb" stroke="#1a84d8" stroke-width="1.2"/>
<circle cx="975.95" cy="650.35" r="2.6" fill="#eaf3fb" stroke="#1a84d8" stroke-width="1.2"/>
<circle cx="975.95" cy="663.45" r="2.6" fill="#eaf3fb" stroke="#1a84d8" stroke-width="1.2"/>
<circle cx="368.5" cy="805.5" r="7" fill="#4472c4"/>
<text x="381" y="813" font-size="22" fill="#595959" textLength="189" lengthAdjust="spacingAndGlyphs" stroke="#ffffff" stroke-width="0.35">Fuel Efficiency (mpg)</text>
<circle cx="617" cy="805.5" r="7" fill="#4472c4"/>
<text x="630" y="813" font-size="22" fill="#595959" textLength="256" lengthAdjust="spacingAndGlyphs" stroke="#ffffff" stroke-width="0.35">Engine Displacement (liters)</text>
<g filter="url(#tipshadow)"><rect x="522.5" y="448.5" width="73.5" height="24" rx="2" fill="#fafafa" stroke="#d0d0d0" stroke-width="1"/></g>
<text x="528" y="466" font-size="15.5" fill="#444" textLength="60" lengthAdjust="spacingAndGlyphs" stroke="#fafafa" stroke-width="0.35">Plot Area</text>
<circle cx="96.6" cy="564.6" r="5.5" fill="#ffffff" stroke="#5e5e5e" stroke-width="2.6"/>
<circle cx="1142.4" cy="564.6" r="5.5" fill="#ffffff" stroke="#5e5e5e" stroke-width="2.6"/>
<circle cx="96.6" cy="842" r="5.5" fill="#ffffff" stroke="#5e5e5e" stroke-width="2.6"/>
<circle cx="619.8" cy="842" r="5.5" fill="#ffffff" stroke="#5e5e5e" stroke-width="2.6"/>
<circle cx="1142.4" cy="842" r="5.5" fill="#ffffff" stroke="#5e5e5e" stroke-width="2.6"/>
<rect x="1158.5" y="295.5" width="34" height="34" fill="#ffffff" stroke="#4a4a4a" stroke-width="1"/>
<path d="M1164,311.2 L1184.7,311.2 M1174.3,301 L1174.3,321.4" stroke="#2e9a48" stroke-width="1.6"/>
<rect x="1158.5" y="342.5" width="34" height="34" fill="#ffffff" stroke="#e2e2e2" stroke-width="1"/>
<path d="M1174.6,360 L1184,351.4" stroke="#8c8c8c" stroke-width="3.2" stroke-linecap="round"/>
<path d="M1174.6,360 L1184,351.4" stroke="#ffffff" stroke-width="1.2" stroke-linecap="round"/>
<path d="M1175.8,360.4 Q1175.8,366.2 1170,366.8 Q1166.3,367.2 1163.5,365.6 Q1166.6,364.8 1167.6,362.2 Q1169.2,358 1173,358.1 Z" fill="#c8c8c8" stroke="#8c8c8c" stroke-width="1"/>
<rect x="1158.5" y="389.5" width="34" height="34" fill="#ffffff" stroke="#e2e2e2" stroke-width="1"/>
<path d="M1164.5,395.8 L1184.2,395.8 L1184.2,398.5 L1176.8,406.5 L1176.8,416 L1171.9,416 L1171.9,406.5 L1164.5,398.5 Z" fill="#e6e6e6" stroke="#8a8a8a" stroke-width="1.2" stroke-linejoin="round"/>
<rect x="0" y="250" width="93.6" height="600" fill="#f0f0f0"/>
<rect x="0" y="250" width="1490" height="44" fill="#f0f0f0"/>
<rect x="42" y="258" width="1.3" height="592" fill="#a6a6a6"/>
<rect x="0" y="530" width="1.5" height="126" fill="#5aa53a"/>
<path d="M90,262.5 L90,290.5 L62,290.5 Z" fill="#dcdcdc"/>
<rect x="400.0" y="260" width="1" height="34" fill="#d9d9d9"/>
<rect x="697.0" y="260" width="1" height="34" fill="#d9d9d9"/>
<rect x="1194.5" y="260" width="1" height="34" fill="#d9d9d9"/>
<rect x="1316.0" y="260" width="1" height="34" fill="#d9d9d9"/>
<rect x="1437.0" y="260" width="1" height="34" fill="#d9d9d9"/>
<rect x="93" y="258" width="1" height="36" fill="#e6e6e6"/>
<rect x="45" y="311.0" width="48" height="1" fill="#dcdcdc"/>
<rect x="45" y="349.0" width="48" height="1" fill="#dcdcdc"/>
<rect x="45" y="387.0" width="48" height="1" fill="#dcdcdc"/>
<rect x="45" y="425.0" width="48" height="1" fill="#dcdcdc"/>
<rect x="45" y="463.0" width="48" height="1" fill="#dcdcdc"/>
<rect x="45" y="501.0" width="48" height="1" fill="#dcdcdc"/>
<rect x="45" y="539.0" width="48" height="1" fill="#dcdcdc"/>
<rect x="45" y="577.0" width="48" height="1" fill="#dcdcdc"/>
<rect x="45" y="615.0" width="48" height="1" fill="#dcdcdc"/>
<rect x="45" y="653.0" width="48" height="1" fill="#dcdcdc"/>
<rect x="45" y="691.0" width="48" height="1" fill="#dcdcdc"/>
<rect x="45" y="729.0" width="48" height="1" fill="#dcdcdc"/>
<rect x="45" y="767.0" width="48" height="1" fill="#dcdcdc"/>
<rect x="45" y="803.0" width="48" height="1" fill="#dcdcdc"/>
<rect x="45" y="839.0" width="48" height="1" fill="#dcdcdc"/>
<rect x="93" y="293" width="1397" height="1.6" fill="#a8a8a8"/>
<rect x="92.8" y="294" width="1" height="556" fill="#bdbdbd"/>
<text x="247" y="286" font-size="25.5" fill="#333" text-anchor="middle" stroke="#f0f0f0" stroke-width="0.5">A</text>
<text x="549" y="286" font-size="25.5" fill="#333" text-anchor="middle" stroke="#f0f0f0" stroke-width="0.5">B</text>
<text x="946" y="286" font-size="25.5" fill="#333" text-anchor="middle" stroke="#f0f0f0" stroke-width="0.5">C</text>
<text x="1255.5" y="286" font-size="25.5" fill="#333" text-anchor="middle" stroke="#f0f0f0" stroke-width="0.5">D</text>
<text x="1377" y="286" font-size="25.5" fill="#333" text-anchor="middle" stroke="#f0f0f0" stroke-width="0.5">E</text>
<svg x="43" y="294" width="50" height="556" overflow="hidden">
<rect x="25.3" y="0" width="2.6" height="6.8" fill="#333"/>
<text x="25.5" y="44.5" font-size="25.5" fill="#333" text-anchor="middle" stroke="#f0f0f0" stroke-width="0.5">2</text>
<text x="25.5" y="82.5" font-size="25.5" fill="#333" text-anchor="middle" stroke="#f0f0f0" stroke-width="0.5">3</text>
<text x="25.5" y="120.5" font-size="25.5" fill="#333" text-anchor="middle" stroke="#f0f0f0" stroke-width="0.5">4</text>
<text x="25.5" y="158.5" font-size="25.5" fill="#333" text-anchor="middle" stroke="#f0f0f0" stroke-width="0.5">5</text>
<text x="25.5" y="196.5" font-size="25.5" fill="#333" text-anchor="middle" stroke="#f0f0f0" stroke-width="0.5">6</text>
<text x="25.5" y="234.5" font-size="25.5" fill="#333" text-anchor="middle" stroke="#f0f0f0" stroke-width="0.5">7</text>
<text x="25.5" y="272.5" font-size="25.5" fill="#333" text-anchor="middle" stroke="#f0f0f0" stroke-width="0.5">8</text>
<text x="25.5" y="310.5" font-size="25.5" fill="#333" text-anchor="middle" stroke="#f0f0f0" stroke-width="0.5">9</text>
<text x="25.5" y="348.5" font-size="25.5" fill="#333" text-anchor="middle" stroke="#f0f0f0" stroke-width="0.5">10</text>
<text x="25.5" y="386.5" font-size="25.5" fill="#333" text-anchor="middle" stroke="#f0f0f0" stroke-width="0.5">11</text>
<text x="25.5" y="424.5" font-size="25.5" fill="#333" text-anchor="middle" stroke="#f0f0f0" stroke-width="0.5">12</text>
<text x="25.5" y="462.5" font-size="25.5" fill="#333" text-anchor="middle" stroke="#f0f0f0" stroke-width="0.5">13</text>
<text x="25.5" y="500.5" font-size="25.5" fill="#333" text-anchor="middle" stroke="#f0f0f0" stroke-width="0.5">14</text>
<text x="25.5" y="536.5" font-size="25.5" fill="#333" text-anchor="middle" stroke="#f0f0f0" stroke-width="0.5">15</text>
<text x="25.5" y="572.5" font-size="25.5" fill="#333" text-anchor="middle" stroke="#f0f0f0" stroke-width="0.5">16</text>
</svg>
<rect x="8.3" y="269.5" width="1.5" height="1.2" fill="#a0a0a0"/><rect x="8.3" y="272" width="1.5" height="1.2" fill="#a0a0a0"/>
<path d="M15,267.5 L19.5,272.2 L15,277 M20.5,267.5 L25,272.2 L20.5,277" fill="none" stroke="#2f8a55" stroke-width="2.4"/>
<rect x="13" y="305" width="17" height="11.5" fill="#ffffff" stroke="#6e6e6e" stroke-width="1.3"/>
<rect x="27" y="304" width="3.5" height="5" fill="#5b8fcf"/>
<rect x="10.3" y="302.5" width="16.8" height="11" fill="#ffffff" stroke="#6e6e6e" stroke-width="1.3"/>
<rect x="10" y="302" width="17.5" height="4" fill="#5b8fcf"/>
<path d="M10.5,309.5 L27,309.5 M16,306 L16,313.5 M21.5,306 L21.5,313.5" stroke="#8a8a8a" stroke-width="0.9"/>
<rect x="12.8" y="346.7" width="17.6" height="11.6" fill="#ffffff" stroke="#707070" stroke-width="1.4"/>
<rect x="15.2" y="349.2" width="12.8" height="6.4" fill="#ababab"/>
<path d="M13,343.6 L18.2,343.6 L15.8,347.8 L17.5,347.8 L10,356.3 L12.5,350.3 L10.5,350.3 Z" fill="#3f7bc6" stroke="#ffffff" stroke-width="0.6"/>
<path d="M15.5,384.5 L26,384.5 L30.5,389 L30.5,390 L15.5,390 Z" fill="#dcdce6" stroke="#6e6e72" stroke-width="1.3"/>
<path d="M13.5,387.5 L25,387.5 L30.5,392.5 L30.5,394 L13.5,394 Z" fill="#dcdce6" stroke="#6e6e72" stroke-width="1.3"/>
<path d="M11.5,391.5 L11.5,398.3 L28,398.3 L30.8,395.8 L30.8,391.5 Z" fill="#c8c8d8" stroke="#6e6e72" stroke-width="1.4"/>
<rect x="11.6" y="423.5" width="19" height="15.7" fill="#ffffff" stroke="#6e6e6e" stroke-width="1.3"/>
<rect x="11.6" y="423" width="19" height="1.6" fill="#6e6e6e"/>
<rect x="15.7" y="424.5" width="2.8" height="14" fill="#bcd2ea"/><rect x="23.1" y="424.5" width="3.2" height="14" fill="#bcd2ea"/>
<path d="M19.6,424.5 L19.6,438.5 M11.6,427.5 L15.7,427.5 M11.6,431.3 L15.7,431.3 M11.6,435 L15.7,435 M26.3,427.5 L30.6,427.5 M26.3,431.3 L30.6,431.3 M26.3,435 L30.6,435 M18.5,427.5 L23.1,427.5 M18.5,431.3 L23.1,431.3 M18.5,435 L23.1,435" stroke="#9a9a9a" stroke-width="0.9"/>
<path d="M15,464.5 L18.5,464.5 L18.5,466.5 L19.2,466.5 L19.2,470 L22.2,470 L22.2,466.5 L23,466.5 L23,464.5 L26.5,464.5 L26.5,466.5 L27.3,466.5 L27.3,471.5 L29.5,471.5 L29.5,478.5 L23.5,478.5 L23.5,473.5 L18,473.5 L18,478.5 L11.6,478.5 L11.6,471.5 L13.8,471.5 L13.8,466.5 L15,466.5 Z" fill="#b4c8e0" stroke="#6e7278" stroke-width="1.3" stroke-linejoin="miter"/>
<rect x="1284.55" y="2.4" width="109.05" height="34.65" fill="none" stroke="#ed1c24" stroke-width="5"/>
<path d="M1343.8,54 L1404,167.6 L1375.3,167.6 L1375.3,278.5 L1311.8,278.5 L1311.8,167.6 L1282.7,167.6 Z" fill="#ed1c24" stroke="#ed1c24" stroke-width="1" stroke-linejoin="round"/>
</svg>
</body></html>
